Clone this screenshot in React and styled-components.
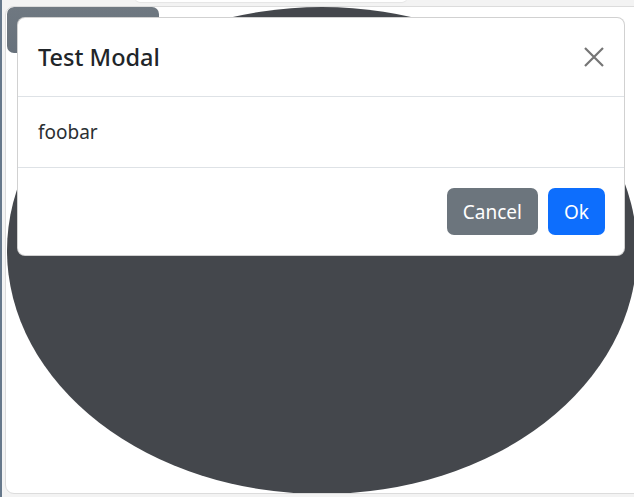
import React from 'react'
import styled, { createGlobalStyle } from 'styled-components'

const GlobalStyle = createGlobalStyle`
  html, body {
    margin: 0;
    padding: 0;
    background: #f3f3f3;
    font-family: "Noto Sans", "Open Sans", sans-serif;
  }
`

const Window = styled.div`
  position: relative;
  width: 634px;
  height: 497px;
  overflow: hidden;
  background: #f3f3f3;
  border-left: 2px solid #66788b;
  box-sizing: border-box;
  padding: 6px 0 3px 3px;
`

const TopTab = styled.div`
  position: absolute;
  left: 133px;
  top: -8px;
  width: 272px;
  height: 10px;
  background: #fff;
  border-radius: 6px;
  box-shadow: 0 1px 1px rgba(0, 0, 0, 0.06);
`

const Panel = styled.div`
  position: relative;
  height: 100%;
  margin-right: -10px;
  background: #fff;
  border: 1px solid #dcdcdc;
  border-radius: 9px;
  box-sizing: border-box;
  overflow: hidden;
`

const TriggerButton = styled.div`
  position: absolute;
  left: 1px;
  top: 0;
  width: 152px;
  height: 46px;
  background: linear-gradient(180deg, #6f7881 0%, #67717b 100%);
  border-radius: 7px;
`

const Backdrop = styled.div`
  position: absolute;
  left: 1px;
  top: 0;
  width: 630px;
  height: 487px;
  border-radius: 50%;
  background: #44474c;
`

const Modal = styled.div`
  position: absolute;
  left: 11px;
  top: 10px;
  width: 608px;
  height: 239px;
  display: flex;
  flex-direction: column;
  background: #fff;
  border: 1px solid rgba(0, 0, 0, 0.18);
  border-radius: 8px;
  box-sizing: border-box;
  color: #212529;
`

const Header = styled.div`
  height: 79px;
  box-sizing: border-box;
  display: flex;
  align-items: center;
  justify-content: space-between;
  padding: 0 19px 0 20px;
  border-bottom: 1px solid #dee2e6;
`

const Title = styled.h5`
  margin: 0;
  font-size: 23.5px;
  font-weight: 500;
  line-height: 1.2;
`

const Close = styled.button`
  width: 22px;
  height: 22px;
  padding: 0;
  border: 0;
  background: none;
  display: flex;
  align-items: center;
  justify-content: center;
  color: #757575;
`

const Body = styled.div`
  height: 71px;
  box-sizing: border-box;
  display: flex;
  align-items: center;
  padding: 0 20px;
  font-size: 19px;
  color: #2b2f33;
  border-bottom: 1px solid #dee2e6;
`

const Footer = styled.div`
  flex: 1;
  display: flex;
  align-items: center;
  justify-content: flex-end;
  gap: 10px;
  padding: 0 19px 0 20px;
`

const Button = styled.button`
  height: 47px;
  padding: 0 16px;
  border: 0;
  border-radius: 7px;
  font-family: inherit;
  font-size: 19px;
  color: #fff;
  background: ${(p) => (p.$primary ? '#0d6efd' : '#6c757d')};
`

const CloseIcon = () => (
  <svg width="20" height="20" viewBox="0 0 20 20">
    <path d="M1 1 L19 19 M19 1 L1 19" stroke="currentColor" strokeWidth="2.2" fill="none" />
  </svg>
)

export default function App() {
  return (
    <>
      <GlobalStyle />
      <Window>
        <TopTab />
        <Panel>
          <TriggerButton />
          <Backdrop />
          <Modal>
            <Header>
              <Title>Test Modal</Title>
              <Close aria-label="Close">
                <CloseIcon />
              </Close>
            </Header>
            <Body>foobar</Body>
            <Footer>
              <Button>Cancel</Button>
              <Button $primary>Ok</Button>
            </Footer>
          </Modal>
        </Panel>
      </Window>
    </>
  )
}
